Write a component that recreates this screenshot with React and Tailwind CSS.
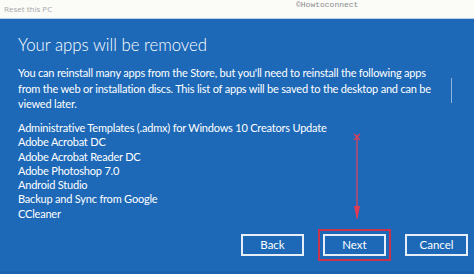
import React from "react";

const apps = [
  "Administrative Templates (.admx) for Windows 10 Creators Update",
  "Adobe Acrobat DC",
  "Adobe Acrobat Reader DC",
  "Adobe Photoshop 7.0",
  "Android Studio",
  "Backup and Sync from Google",
  "CCleaner",
];

const para = [
  "You can reinstall many apps from the Store, but you'll need to reinstall the following apps",
  "from the web or installation discs. This list of apps will be saved to the desktop and can be",
  "viewed later.",
];

export default function App() {
  return (
    <div className="w-[474px] h-[274px] flex flex-col overflow-hidden font-['Lato',sans-serif]">
      <div className="h-[19px] bg-[#fbfbf8] border-b border-[#b9d3e6] flex items-start justify-between relative">
        <span className="text-[8px] leading-none text-[#a7a7a7] ml-[4px] mt-[5px] font-['Open_Sans',sans-serif]">Reset this PC</span>
        <span className="absolute left-[296px] top-[1px] text-[8px] leading-none text-[#8a8a8a] font-['Liberation_Mono',monospace]">©Howtoconnect</span>
      </div>
      <div className="flex-1 bg-[#1d69b8] relative flex flex-col">
        <div className="px-[18px] pt-[15px] text-white">
          <h1 className="text-[16.8px] leading-[22px] font-light whitespace-nowrap">Your apps will be removed</h1>
          <p className="mt-[9px] text-[11px] leading-[15.5px] tracking-[-0.2px] whitespace-nowrap">
            {para.map((l) => (
              <span key={l} className="block">{l}</span>
            ))}
          </p>
          <ul className="mt-[9.5px] text-[11px] leading-[14.3px] tracking-[-0.2px] whitespace-nowrap">
            {apps.map((a) => (
              <li key={a}>{a}</li>
            ))}
          </ul>
        </div>
        <div className="absolute left-[451px] top-[59px] w-[1px] h-[25px] bg-[#8fb5e0]" />
        {/* red arrow annotation */}
        <svg className="absolute left-[350px] top-[113px]" width="14" height="92" viewBox="0 0 14 92">
          <path d="M4 2 L10 8 M10 2 L4 8" stroke="#e23a55" strokeWidth="1.3" />
          <line x1="7" y1="3" x2="7" y2="86" stroke="#d9445f" strokeWidth="1.3" />
          <path d="M4 74 L7 88 L10 74 Z" fill="#e23a55" />
        </svg>
        <div className="mt-auto mb-[15px] flex justify-end gap-[14px] pr-[6px] text-white text-[11.5px]">
          <button className="w-[63px] h-[22px] border-2 border-[#e6eef8] flex items-center justify-center">Back</button>
          <div className="p-[3px] border-2 border-[#c8334f] -my-[5px]">
            <button className="w-[63px] h-[22px] border-2 border-[#e6eef8] flex items-center justify-center">Next</button>
          </div>
          <button className="w-[63px] h-[22px] border-2 border-[#e6eef8] flex items-center justify-center">Cancel</button>
        </div>
        <div className="h-[3px] bg-[#1a62ad]" />
      </div>
    </div>
  );
}
